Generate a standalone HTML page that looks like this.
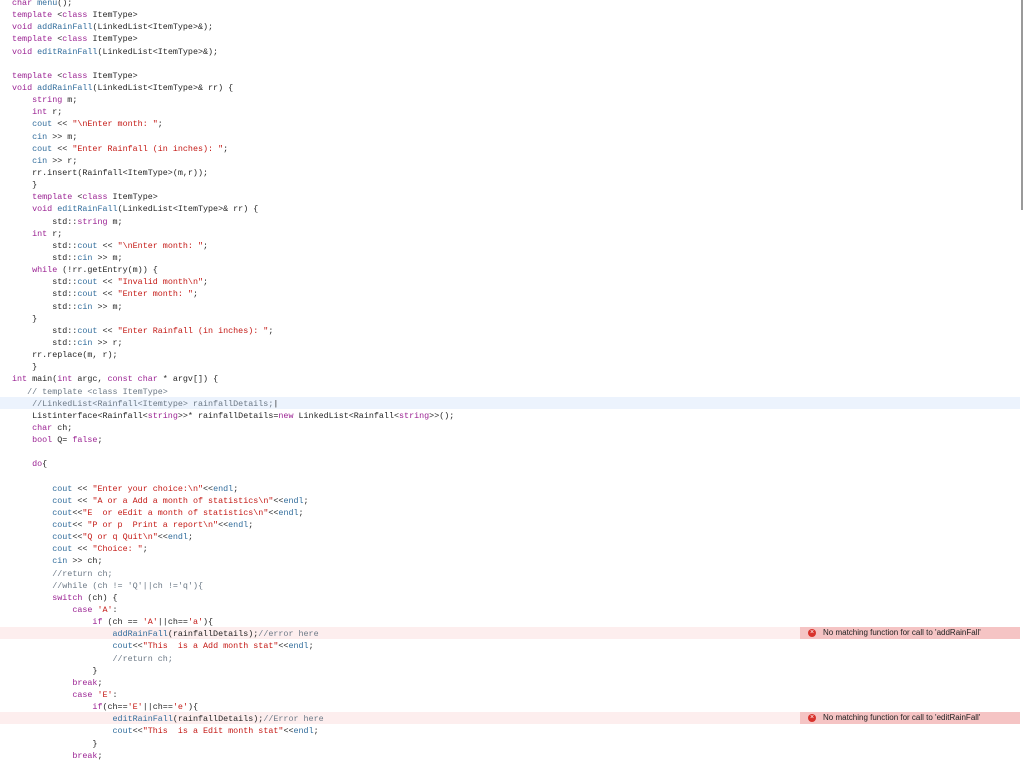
<!DOCTYPE html>
<html><head><meta charset="utf-8"><style>
body{margin:0;width:1024px;height:759px;background:#fff;overflow:hidden;position:relative;font-family:"Liberation Mono",monospace}
pre{position:absolute;left:12px;top:-3px;margin:0;font-family:"Liberation Mono",monospace;font-size:8.4px;line-height:12.14px;color:#262626;z-index:2}
.k{color:#9b2393}.f{color:#326d9c}.s{color:#c41a16}.c{color:#6c7986}.n{color:#1c00cf}
.bg{position:absolute;left:0;height:12px;z-index:1}
.err{position:absolute;left:800px;width:220px;height:12px;background:#f5c4c4;z-index:1;font-family:"Liberation Sans",sans-serif;font-size:8px;line-height:12px;color:#222}
.err i{position:absolute;left:8px;top:2px;width:8px;height:8px;border-radius:50%;background:#d8322c;color:#fff;font-size:7px;line-height:8px;text-align:center;font-style:normal}
.err span{position:absolute;left:23px}
</style></head><body>
<div class="bg" style="top:397px;width:1020px;background:#ecf3fd"></div>
<div class="bg" style="top:627px;width:800px;background:#fdeeee"></div>
<div class="bg" style="top:712px;width:800px;background:#fdeeee"></div>
<div class="err" style="top:627px"><i>×</i><span>No matching function for call to 'addRainFall'</span></div>
<div class="err" style="top:712px"><i>×</i><span>No matching function for call to 'editRainFall'</span></div>
<div style="position:absolute;left:1021px;top:0;width:2px;height:210px;background:#9a9a9a"></div>
<pre><span class="k">char</span> <span class="f">menu</span>();
<span class="k">template</span> &lt;<span class="k">class</span> ItemType&gt;
<span class="k">void</span> <span class="f">addRainFall</span>(LinkedList&lt;ItemType&gt;&amp;);
<span class="k">template</span> &lt;<span class="k">class</span> ItemType&gt;
<span class="k">void</span> <span class="f">editRainFall</span>(LinkedList&lt;ItemType&gt;&amp;);

<span class="k">template</span> &lt;<span class="k">class</span> ItemType&gt;
<span class="k">void</span> <span class="f">addRainFall</span>(LinkedList&lt;ItemType&gt;&amp; rr) {
    <span class="k">string</span> m;
    <span class="k">int</span> r;
    <span class="f">cout</span> &lt;&lt; <span class="s">"\nEnter month: "</span>;
    <span class="f">cin</span> &gt;&gt; m;
    <span class="f">cout</span> &lt;&lt; <span class="s">"Enter Rainfall (in inches): "</span>;
    <span class="f">cin</span> &gt;&gt; r;
    rr.insert(Rainfall&lt;ItemType&gt;(m,r));
    }
    <span class="k">template</span> &lt;<span class="k">class</span> ItemType&gt;
    <span class="k">void</span> <span class="f">editRainFall</span>(LinkedList&lt;ItemType&gt;&amp; rr) {
        std::<span class="k">string</span> m;
    <span class="k">int</span> r;
        std::<span class="f">cout</span> &lt;&lt; <span class="s">"\nEnter month: "</span>;
        std::<span class="f">cin</span> &gt;&gt; m;
    <span class="k">while</span> (!rr.getEntry(m)) {
        std::<span class="f">cout</span> &lt;&lt; <span class="s">"Invalid month\n"</span>;
        std::<span class="f">cout</span> &lt;&lt; <span class="s">"Enter month: "</span>;
        std::<span class="f">cin</span> &gt;&gt; m;
    }
        std::<span class="f">cout</span> &lt;&lt; <span class="s">"Enter Rainfall (in inches): "</span>;
        std::<span class="f">cin</span> &gt;&gt; r;
    rr.replace(m, r);
    }
<span class="k">int</span> main(<span class="k">int</span> argc, <span class="k">const</span> <span class="k">char</span> * argv[]) {
   <span class="c">// template &lt;class ItemType&gt;</span>
    <span class="c">//LinkedList&lt;Rainfall&lt;Itemtype&gt; rainfallDetails;</span>|
    Listinterface&lt;Rainfall&lt;<span class="k">string</span>&gt;&gt;* rainfallDetails=<span class="k">new</span> LinkedList&lt;Rainfall&lt;<span class="k">string</span>&gt;&gt;();
    <span class="k">char</span> ch;
    <span class="k">bool</span> Q= <span class="k">false</span>;

    <span class="k">do</span>{

        <span class="f">cout</span> &lt;&lt; <span class="s">"Enter your choice:\n"</span>&lt;&lt;<span class="f">endl</span>;
        <span class="f">cout</span> &lt;&lt; <span class="s">"A or a Add a month of statistics\n"</span>&lt;&lt;<span class="f">endl</span>;
        <span class="f">cout</span>&lt;&lt;<span class="s">"E  or eEdit a month of statistics\n"</span>&lt;&lt;<span class="f">endl</span>;
        <span class="f">cout</span>&lt;&lt; <span class="s">"P or p  Print a report\n"</span>&lt;&lt;<span class="f">endl</span>;
        <span class="f">cout</span>&lt;&lt;<span class="s">"Q or q Quit\n"</span>&lt;&lt;<span class="f">endl</span>;
        <span class="f">cout</span> &lt;&lt; <span class="s">"Choice: "</span>;
        <span class="f">cin</span> &gt;&gt; ch;
        <span class="c">//return ch;</span>
        <span class="c">//while (ch != 'Q'||ch !='q'){</span>
        <span class="k">switch</span> (ch) {
            <span class="k">case</span> <span class="s">'A'</span>:
                <span class="k">if</span> (ch == <span class="s">'A'</span>||ch==<span class="s">'a'</span>){
                    <span class="f">addRainFall</span>(rainfallDetails);<span class="c">//error here</span>
                    <span class="f">cout</span>&lt;&lt;<span class="s">"This  is a Add month stat"</span>&lt;&lt;<span class="f">endl</span>;
                    <span class="c">//return ch;</span>
                }
            <span class="k">break</span>;
            <span class="k">case</span> <span class="s">'E'</span>:
                <span class="k">if</span>(ch==<span class="s">'E'</span>||ch==<span class="s">'e'</span>){
                    <span class="f">editRainFall</span>(rainfallDetails);<span class="c">//Error here</span>
                    <span class="f">cout</span>&lt;&lt;<span class="s">"This  is a Edit month stat"</span>&lt;&lt;<span class="f">endl</span>;
                }
            <span class="k">break</span>;</pre>
</body></html>
